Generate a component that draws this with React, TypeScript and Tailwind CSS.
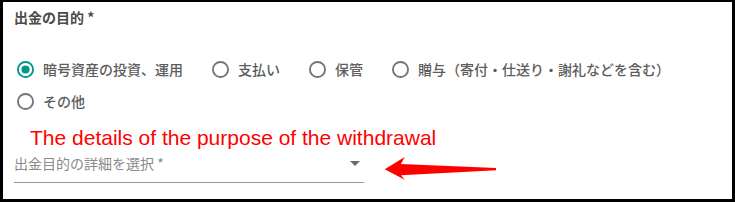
import React from 'react';

const jp = "font-['Noto_Sans_CJK_JP','Noto_Sans',sans-serif]";

const purposes = [
  '暗号資産の投資、運用',
  '支払い',
  '保管',
  '贈与（寄付・仕送り・謝礼などを含む）',
  'その他',
];

function RadioIcon({ checked }: { checked: boolean }) {
  return (
    <svg width="17" height="17" viewBox="0 0 18 18" className="shrink-0">
      <circle
        cx="9"
        cy="9"
        r="8"
        fill="none"
        stroke={checked ? '#009688' : '#757575'}
        strokeWidth="2"
      />
      {checked && <circle cx="9" cy="9" r="4.3" fill="#009688" />}
    </svg>
  );
}

export default function App() {
  const selected = 0;

  return (
    <div className="relative w-[735px] h-[202px] bg-white border-black border-t-2 border-l-[3px] border-r-[3px] border-b-[3px] pl-[11px] pt-[5px] overflow-hidden">
      {/* Title */}
      <div className={`${jp} text-[14px] leading-5 font-bold text-[#4a4a4a]`}>
        出金の目的 *
      </div>

      {/* Radio group */}
      <div className="mt-[26px] flex flex-wrap gap-x-[29px] pl-[3px] w-[700px]">
        {purposes.map((p, i) => (
          <label key={p} className="flex items-center h-8 gap-[9px]">
            <RadioIcon checked={i === selected} />
            <span className={`${jp} text-[14px] font-medium text-[#5c5c5c]`}>{p}</span>
          </label>
        ))}
      </div>

      {/* Annotation */}
      <div className="mt-[9px] pl-[16px] font-['Liberation_Sans',Arial,sans-serif] text-[21px] leading-6 text-[#ff0000]">
        The details of the purpose of the withdrawal
      </div>

      {/* Select */}
      <div className="mt-[3px] w-[350px] flex items-center justify-between pb-[9px] border-b border-[#9a9a9a]">
        <span className={`${jp} text-[14px] leading-5 text-[#8a8a8a]`}>出金目的の詳細を選択 *</span>
        <svg width="10" height="5" viewBox="0 0 10 5" className="mr-[4px]">
          <path d="M0 0 L10 0 L5 5 Z" fill="#6b6b6b" />
        </svg>
      </div>

      {/* Red arrow */}
      <svg
        className="absolute left-[374px] top-[146px]"
        width="122"
        height="34"
        viewBox="-3 -2 122 34"
      >
        <path
          d="M4.7 19.3 L24.7 7 L21 14 L116 18 L116 20.3 L21 25.3 L24.7 29.7 Z"
          fill="#ff0000"
        />
      </svg>
    </div>
  );
}
